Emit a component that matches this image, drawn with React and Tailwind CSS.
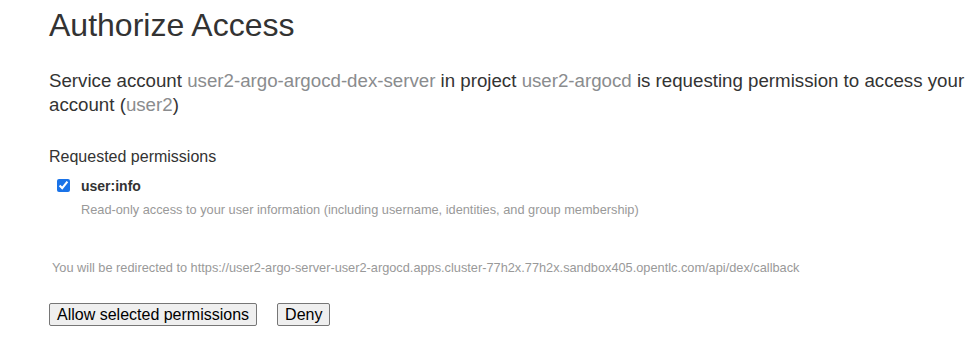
import React, { useState } from 'react';

const App = () => {
  const [checked, setChecked] = useState(true);

  return (
    <div className="min-h-screen bg-white pl-[49px] pt-[8px] text-[#333] font-['Liberation_Sans',Arial,sans-serif]">
      <h1 className="text-[32px] leading-[35px] font-normal">Authorize Access</h1>

      <p className="mt-[26px] text-[18.7px] leading-[24px]">
        Service account <span className="text-[#8a8c8e]">user2-argo-argocd-dex-server</span> in project{' '}
        <span className="text-[#8a8c8e]">user2-argocd</span> is requesting permission to access your account (
        <span className="text-[#8a8c8e]">user2</span>)
      </p>

      <h3 className="mt-[30px] text-[16px] leading-[20px]">Requested permissions</h3>

      <div className="mt-[9px] ml-[8px] flex items-start gap-[11px]">
        <input
          type="checkbox"
          checked={checked}
          onChange={(e) => setChecked(e.target.checked)}
          className="mt-[3px] w-[13px] h-[13px] accent-[#1a73e8]"
        />
        <div>
          <div className="text-[14px] leading-[20px] font-bold">user:info</div>
          <div className="mt-[5px] text-[12.78px] leading-[18px] text-[#999]">
            Read-only access to your user information (including username, identities, and group membership)
          </div>
        </div>
      </div>

      <div className="mt-[40px] ml-[3px] text-[12.78px] leading-[18px] text-[#999]">
        You will be redirected to https://user2-argo-server-user2-argocd.apps.cluster-77h2x.77h2x.sandbox405.opentlc.com/api/dex/callback
      </div>

      <div className="mt-[26px] flex gap-[20px]">
        <button className="h-[23px] px-[7px] text-[16px] leading-[19px] text-black bg-[#efefef] border border-[#767676] rounded-[2px]">
          Allow selected permissions
        </button>
        <button className="h-[23px] px-[7px] text-[16px] leading-[19px] text-black bg-[#efefef] border border-[#767676] rounded-[2px]">
          Deny
        </button>
      </div>
    </div>
  );
};

export default App;
